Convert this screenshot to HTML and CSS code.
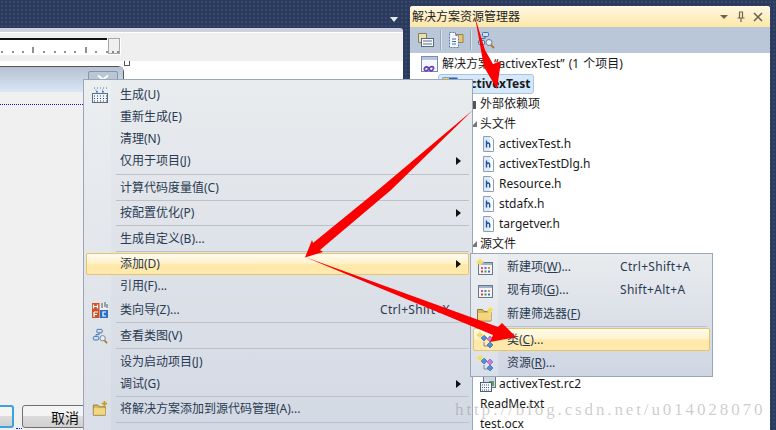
FILE: index.html
```html
<!DOCTYPE html>
<html lang="zh">
<head>
<meta charset="utf-8">
<title>解决方案资源管理器</title>
<link rel="stylesheet" href="styles.css">
</head>
<body>
<svg class="defs" width="0" height="0">
  <defs>
    <symbol id="i-h" viewBox="0 0 16 16">
      <path d="M3.500 .5h7l3 3v12h-10z" fill="#fff" stroke="#8aa0b8"/>
      <path d="M4 1h6v14H4z" fill="#dfeaf6"/>
      <path d="M6.500 4.500v7M6.500 8c1-1.400 3.200-1.400 3.200 .5v3" fill="none" stroke="#1c52a8" stroke-width="1.400"/>
    </symbol>
    <symbol id="i-newitem" viewBox="0 0 18 18">
      <rect x="2.500" y="4.500" width="14" height="12" fill="#f2f4f7" stroke="#68778c"/>
      <rect x="3" y="5" width="13" height="2" fill="#9fb3cc"/>
      <rect x="5" y="9" width="2" height="2" fill="#d94f8a"/><rect x="8.500" y="9" width="2" height="2" fill="#5a6fd0"/><rect x="12" y="9" width="2" height="2" fill="#e0902c"/>
      <rect x="5" y="12.500" width="2" height="2" fill="#d0452e"/><rect x="8.500" y="12.500" width="2" height="2" fill="#3d9a3d"/><rect x="12" y="12.500" width="2" height="2" fill="#3d6fd0"/>
    </symbol>
    <symbol id="i-class" viewBox="0 0 18 18">
      <path d="M8 11v4h4" fill="none" stroke="#7a8798"/>
      <path d="M5 7l3-3 3 3-3 3z" fill="#4a90d8" stroke="#2a5a98" stroke-width=".6"/>
      <path d="M11 8l3-3 3 3-3 3z" fill="#c87be0" stroke="#8a4aa8" stroke-width=".6"/>
      <path d="M11 14l3-3 3 3-3 3z" fill="#4a90d8" stroke="#2a5a98" stroke-width=".6"/>
      <path class="star" d="M4 0l1 2 2 1 1 1-2 1-1 1-1 2-1-2-2-1-1-1 2-1 1-1z"/>
    </symbol>
    <symbol id="i-folder" viewBox="0 0 18 18">
      <path d="M1.500 4.500h5l1.500 2h7v9.500h-13.500z" fill="#d8b858" stroke="#8f7a40"/>
      <path d="M2 8h13v7.500H2z" fill="#f3d67e"/>
    </symbol>
    <symbol id="i-build" viewBox="0 0 16 16">
      <rect x=".5" y="6.500" width="15" height="9" fill="#f0f3f7" stroke="#5c6c84"/>
      <path d="M2 9h1M5 9h1M8 9h1M11 9h1M14 9h1M2 11.500h1M5 11.500h1M8 11.500h1M11 11.500h1M14 11.500h1M2 14h1M5 14h1M8 14h1M11 14h1M14 14h1" stroke="#39475c"/>
      <path d="M4 4l1 3 1-3zM10 4l1 3 1-3z" fill="#2a6fe0"/>
      <path d="M2 1h1M5 1h1M8 1h1M11 1h1M14 1h1M3.500 3h1M10 3h1" stroke="#4a7ac0"/>
    </symbol>
    <symbol id="i-diagram" viewBox="0 0 18 18">
      <rect x="5.500" y="1.500" width="6" height="4" rx="1" fill="#cfe0f2" stroke="#3f6ea8"/>
      <rect x="1.500" y="9.500" width="6" height="4" rx="1" fill="#cfe0f2" stroke="#3f6ea8"/>
      <path d="M8 5.500v2H4.500v2" fill="none" stroke="#3f6ea8"/>
      <circle cx="12" cy="11.500" r="3" fill="#e8f0f8" stroke="#6a7a8c"/>
      <path d="M14 14l3 3" stroke="#b8782c" stroke-width="2"/>
    </symbol>
  </defs>
</svg>

<span class="dock-arrow"></span>

<section class="doc">
  <div class="doc-tools">
    <svg class="ruler" width="121" height="17" viewBox="0 0 121 17">
      <rect width="121" height="17" fill="#fff"/>
      <rect width="107" height="2" y="0" fill="#111"/>
      <path d="M2 13v2M13 13v2M23 13v2M33 9v6M44 13v2M55 13v2M65 13v2M75 13v2M86 9v6M96 13v2M107 13v2" stroke="#222"/>
      <rect x="108.500" y=".5" width="11" height="15" fill="#f0f0f0" stroke="#a8a8a8"/>
      <path d="M113 13v2M118 13v2" stroke="#222"/>
    </svg>
  </div>
  <div class="canvas">
    <span class="handle"></span>
    <div class="dialog">
      <div class="dlg-title">
        <span class="dlg-close">
          <svg width="12" height="6" viewBox="0 0 12 6"><path d="M1 .5l5 4 5-4" fill="none" stroke="#fff" stroke-width="2"/></svg>
        </span>
      </div>
      <div class="dlg-dots"></div>
      <div class="dlg-buttons">
        <button class="btn btn-ok"></button>
        <button class="btn btn-cancel">取消</button>
      </div>
      <div class="dlg-foot"></div>
    </div>
  </div>
</section>

<aside class="panel">
  <header class="panel-head">
    <span class="panel-title">解决方案资源管理器</span>
    <span class="panel-btns">
      <svg width="10" height="6" viewBox="0 0 10 6"><path d="M1 1h8L5 5z" fill="#6a6450"/></svg>
      <svg width="10" height="12" viewBox="0 0 10 12"><path d="M3 1h4M3.500 1v6M6.500 1v6M1.500 7h7M5 7v4" fill="none" stroke="#6a6450" stroke-width="1.200"/></svg>
      <svg width="10" height="10" viewBox="0 0 10 10"><path d="M1 1l8 8M9 1L1 9" stroke="#6a6450" stroke-width="1.600"/></svg>
    </span>
  </header>
  <div class="panel-tools">
    <svg width="18" height="18" viewBox="0 0 18 18"><path d="M1.500 2.500h8v9h-8z" fill="#eadfae" stroke="#8a8058"/><rect x="4.500" y="7.500" width="12" height="8" fill="#f6f8fb" stroke="#5a6a82"/><path d="M6 10h9M6 13h9" stroke="#5a6a82"/></svg>
    <span class="tool-sep"></span>
    <svg width="18" height="18" viewBox="0 0 18 18"><path d="M8 3.500h8v8H8z" fill="#e8c668" stroke="#9a8448"/><path d="M2.500 1.500h6v3h3v12h-9z" fill="#f4f7fb" stroke="#5a7ab0" stroke-dasharray="2 1"/><path d="M5 8h4M5 10.500h4M5 13h4" stroke="#3f6ea8"/></svg>
    <span class="tool-sep"></span>
    <svg width="18" height="18" viewBox="0 0 18 18"><use href="#i-diagram"/></svg>
  </div>
  <div class="tree">
    <div class="node lvl0">
      <svg width="17" height="17" viewBox="0 0 17 17"><rect x=".5" y=".5" width="16" height="15" fill="#f4f7fc" stroke="#7a8aa8"/><rect x="1" y="1" width="15" height="3" fill="#b7c6e0"/><path d="M3 13c1.500-3 3.500-3 5 0s3.500 2 4.500-.5c.5-2-2.500-3-4.500 0s-4 3-5 .5" fill="none" stroke="#6a3fb0" stroke-width="1.800"/></svg>
      <span class="sol-name">解决方案 “activexTest” (1 个项目)</span>
    </div>
    <div class="node lvl1"><span class="selected"><svg width="16" height="14" viewBox="0 0 16 14"><rect x=".5" y=".5" width="15" height="13" fill="#2f5fb0"/><rect x="1" y="1" width="6" height="5" fill="#f0d040"/></svg><b>ActivexTest</b></span></div>
    <div class="node lvl2 folder">外部依赖项</div>
    <div class="node lvl2 folder open">头文件</div>
    <div class="node lvl3"><svg width="16" height="16"><use href="#i-h"/></svg><span>activexTest.h</span></div>
    <div class="node lvl3"><svg width="16" height="16"><use href="#i-h"/></svg><span>activexTestDlg.h</span></div>
    <div class="node lvl3"><svg width="16" height="16"><use href="#i-h"/></svg><span>Resource.h</span></div>
    <div class="node lvl3"><svg width="16" height="16"><use href="#i-h"/></svg><span>stdafx.h</span></div>
    <div class="node lvl3"><svg width="16" height="16"><use href="#i-h"/></svg><span>targetver.h</span></div>
    <div class="node lvl2 folder open">源文件</div>
    <div class="covered"></div>
    <div class="node lvl3"><svg width="16" height="16" viewBox="0 0 16 16"><rect x="3.500" y=".5" width="12" height="11" fill="#cfd8e4" stroke="#66768c"/><rect x="9" y="5" width="5" height="5" fill="#5fa05a"/><rect x=".5" y="6.500" width="11" height="9" fill="#f4f6f9" stroke="#4f5f78"/><path d="M2 9h8M2 11.500h8M2 14h8" stroke="#4f5f78" stroke-dasharray="1 1"/></svg><span>activexTest.rc2</span></div>
    <div class="node lvl2">ReadMe.txt</div>
    <div class="node lvl2">test.ocx</div>
  </div>
</aside>

<nav class="menu">
  <div class="row"><svg class="ico" width="16" height="16"><use href="#i-build"/></svg><span>生成(U)</span></div>
  <div class="row"><span class="ico"></span><span>重新生成(E)</span></div>
  <div class="row"><span class="ico"></span><span>清理(N)</span></div>
  <div class="row"><span class="ico"></span><span>仅用于项目(J)</span><i class="more"></i></div>
  <div class="sep s1"></div>
  <div class="row"><span class="ico"></span><span>计算代码度量值(C)</span></div>
  <div class="sep s2"></div>
  <div class="row"><span class="ico"></span><span>按配置优化(P)</span><i class="more"></i></div>
  <div class="sep s4"></div>
  <div class="row"><span class="ico"></span><span>生成自定义(B)...</span></div>
  <div class="sep s2"></div>
  <div class="row hot"><span class="ico"></span><span>添加(D)</span><i class="more"></i></div>
  <div class="row"><span class="ico"></span><span>引用(F)...</span></div>
  <div class="row push"><svg class="ico" width="16" height="16" viewBox="0 0 16 16"><rect y="1" width="7.500" height="7" fill="#d4502a"/><rect x="8" y="8" width="8" height="8" fill="#2a70c8"/><rect y="8" width="7.500" height="8" fill="#c8542c"/><rect x="8" y="1" width="8" height="7" fill="#e8eef4"/><path d="M10 1v5M13 0v5M15 2v4" stroke="#555"/><path d="M1.500 2.500v4M5.500 2.500v4M1.500 4.500h4M2 10h4M2 10v5M2 12.500h3M14 10h-3v4h3" fill="none" stroke="#fff" stroke-width="1.200"/></svg><span>类向导(Z)...</span><span class="key">Ctrl+Shift+X</span></div>
  <div class="sep s4"></div>
  <div class="row"><svg class="ico" width="16" height="16" viewBox="0 0 18 18"><use href="#i-diagram"/></svg><span>查看类图(V)</span></div>
  <div class="sep s4"></div>
  <div class="row"><span class="ico"></span><span>设为启动项目(J)</span></div>
  <div class="row"><span class="ico"></span><span>调试(G)</span><i class="more"></i></div>
  <div class="sep s2"></div>
  <div class="row"><svg class="ico" width="16" height="16" viewBox="0 0 18 18"><use href="#i-folder"/><path d="M14 0v6M11 3h6" stroke="#c8a020" stroke-width="2"/></svg><span>将解决方案添加到源代码管理(A)...</span></div>
  <div class="sep s1"></div>
</nav>

<nav class="submenu">
  <div class="row"><svg class="ico" width="18" height="18" viewBox="0 0 18 18"><use href="#i-newitem"/><path class="star" d="M4 0l1 2 2 1 1 1-2 1-1 1-1 2-1-2-2-1-1-1 2-1 1-1z"/></svg><span>新建项(<u>W</u>)...</span><span class="key">Ctrl+Shift+A</span></div>
  <div class="row next"><svg class="ico" width="18" height="18"><use href="#i-newitem"/></svg><span>现有项(<u>G</u>)...</span><span class="key">Shift+Alt+A</span></div>
  <div class="row push"><svg class="ico" width="18" height="18" viewBox="0 0 18 18"><use href="#i-folder"/><path class="star" transform="translate(10 1)" d="M4 0l1 2 2 1 1 1-2 1-1 1-1 2-1-2-2-1-1-1 2-1 1-1z"/></svg><span>新建筛选器(<u>F</u>)</span></div>
  <div class="sep s4"></div>
  <div class="row hot"><svg class="ico" width="18" height="18"><use href="#i-class"/></svg><span>类(<u>C</u>)...</span></div>
  <div class="row next"><svg class="ico" width="18" height="18"><use href="#i-class"/></svg><span>资源(<u>R</u>)...</span></div>
</nav>

<svg class="arrows" width="776" height="430" viewBox="0 0 776 430">
  <path d="M475 17L485 50 493 64 501 61 497 89 484 67Z"/>
  <path d="M473 110L391 190 320 250 323 252 305 257.500 312 240 313 243 378 190Z"/>
  <path d="M305 257L498 327 502 323 516 337 490 342 493 335Z"/>
</svg>

<div class="watermark">http://blog.csdn.net/u014028070</div>
</body>
</html>
```

FILE: styles.css
```css
* { box-sizing: border-box; }
html, body { margin: 0; padding: 0; }
body {
  position: relative;
  width: 776px;
  height: 430px;
  overflow: hidden;
  font: 12px/16px "Noto Sans", "Open Sans", "Noto Sans CJK SC", sans-serif;
  color: #1b2a3c;
  background-color: #2a3b5d;
  background-image: radial-gradient(#36486c 1px, transparent 1px);
  background-size: 4px 4px;
}
.defs { position: absolute; }
.star { fill: #f3dc62; stroke: #f8efae; stroke-width: .5; }
u { text-decoration: underline; text-underline-offset: 1px; }

.dock-arrow {
  position: absolute;
  left: 390px;
  top: 17px;
  border: 4px solid transparent;
  border-top: 5px solid #e4e8f0;
  border-bottom: 0;
}

/* document pane */
.doc {
  position: absolute;
  left: 0;
  top: 28px;
  width: 403px;
  height: 402px;
  display: flex;
  flex-direction: column;
  background: #fff;
  border-top: 4px solid #cdd2de;
  border-top-right-radius: 3px;
  overflow: hidden;
}
.doc-tools {
  height: 28px;
  margin-top: 1px;
  padding-top: 5px;
  background: #efefef;
  flex: none;
}
.ruler { display: block; }
.canvas { position: relative; flex: 1; padding-top: 5px; min-height: 0; }
.handle {
  position: absolute;
  left: 124px;
  top: 0;
  width: 6px;
  height: 5px;
  background: #fff;
  border: 1px solid #555;
  border-top: 0;
}
.dialog {
  width: 124px;
  height: 100%;
  display: flex;
  flex-direction: column;
  background: #f0f0f0;
  border-top: 1px solid #555;
  border-right: 1px solid #555;
  border-top-right-radius: 6px;
}
.dlg-title {
  height: 25px;
  flex: none;
  padding: 4px 4px 0 88px;
  background: linear-gradient(#b4c1d0, #dae7f6);
}
.dlg-close {
  display: flex;
  justify-content: center;
  padding-top: 3px;
  width: 30px;
  height: 20px;
  border: 1px solid #8a94a4;
  border-radius: 2px;
  background: #b9c6d6;
}
.dlg-close svg { display: block; }
.dlg-dots { margin-top: 12px; border-top: 1px dotted #1a1ab8; }
.dlg-buttons {
  margin-top: auto;
  display: flex;
  gap: 8px;
  margin-left: -40px;
  width: 160px;
  flex: none;
}
.btn {
  height: 23px;
  padding: 0;
  flex: none;
  font: 14px/20px "Noto Sans CJK SC", sans-serif;
  color: #111;
  border-radius: 3px;
  border: 1px solid #707070;
  background: linear-gradient(#f4f4f4 45%, #dcdcdc 50%, #d0d0d0);
}
.btn-ok { width: 54px; border: 2px solid #3aa2dc; }
.btn-cancel { width: 86px; }
.dlg-foot {
  flex: none;
  height: 2px;
  margin: 0 0 0 16px;
  width: 6px;
  border-top: 1px dotted #1a1ab8;
}

/* solution explorer */
.panel {
  position: absolute;
  left: 410px;
  top: 6px;
  width: 360px;
  height: 424px;
  background: #fff;
  border-radius: 3px 3px 0 0;
  overflow: hidden;
}
.panel-head {
  height: 21px;
  display: flex;
  align-items: center;
  justify-content: space-between;
  padding: 0 7px 0 2px;
  background: linear-gradient(#fff8e4, #fde7a6);
  color: #222;
}
.panel-btns { display: flex; align-items: center; gap: 7px; }
.panel-btns svg { display: block; }
.panel-tools {
  height: 26px;
  display: flex;
  align-items: center;
  gap: 5px;
  padding-left: 7px;
  background: #bac7d8;
}
.tool-sep { width: 1px; height: 20px; background: #9aa8bc; border-right: 1px solid #d8e0ea; box-sizing: content-box; }
.tree { color: #1a1a1a; padding-top: 1px; }
.node {
  height: 20px;
  display: flex;
  align-items: center;
  gap: 3px;
  position: relative;
  white-space: nowrap;
}
.lvl0 { padding-left: 11px; gap: 4px; }
.sol-name { word-spacing: 1px; }
.lvl1 { padding-left: 28px; }
.lvl2 { padding-left: 70px; }
.lvl3 { padding-left: 70px; }
.folder::before {
  content: "";
  position: absolute;
  left: 58px;
  top: 7px;
  width: 8px;
  height: 8px;
  background: #555;
}
.open::before {
  left: 61px;
  width: 0;
  height: 0;
  background: none;
  border: 3px solid transparent;
  border-right-color: #777;
  border-bottom-color: #777;
}
.selected {
  display: flex;
  align-items: center;
  gap: 4px;
  height: 20px;
  width: 96px;
  padding-left: 3px;
  background: #d6e8fb;
  border: 1px solid #a8c4e4;
  border-radius: 3px;
}
.selected b { font-weight: 700; }
.covered { height: 120px; }

/* context menus */
.menu, .submenu {
  position: absolute;
  border: 1px solid #9ba6b8;
  color: #2a3a52;
}
.menu {
  left: 83px;
  top: 79px;
  width: 390px;
  height: 351px;
  padding: 4px 3px 0 2px;
  border-bottom: 0;
  background:
    linear-gradient(rgba(255,255,255,.14), rgba(255,255,255,.14)) 0 0 / 27px 100% no-repeat,
    linear-gradient(#e9ecee, #d3d9e4);
}
.submenu {
  left: 470px;
  top: 253px;
  width: 243px;
  height: 124px;
  padding: 2px 2px 0 2px;
  background:
    linear-gradient(rgba(255,255,255,.22), rgba(255,255,255,.22)) 0 0 / 27px 100% no-repeat,
    linear-gradient(#e9ecee, #cfd6e3);
}
.row {
  position: relative;
  height: 22px;
  display: flex;
  align-items: center;
  border: 1px solid transparent;
  border-radius: 2px;
  white-space: nowrap;
}
.ico { flex: none; display: block; }
.menu .ico { width: 16px; margin: 0 12px 0 5px; }
.submenu .ico { width: 18px; margin: 0 13px 0 2px; }
.row.next { margin-top: 1px; }
.row.push { margin-top: 2px; }
.hot {
  border-color: #e8c468;
  background: linear-gradient(#fffbee, #fff3cd 45%, #ffe8a8 55%, #ffe9ae);
}
.submenu .hot { height: 23px; margin-top: -1px; }
.more {
  position: absolute;
  right: 7px;
  top: 6px;
  border: 4px solid transparent;
  border-left: 5px solid #111;
  border-right: 0;
}
.key { position: absolute; letter-spacing: .3px; }
.menu .key { left: 293px; }
.submenu .key { left: 146px; }
.sep { height: 1px; background: #bcc1ca; }
.menu .sep { margin-left: 30px; }
.submenu .sep { margin-left: 3px; margin-right: 3px; }
.s1 { margin-top: 2px; margin-bottom: 2px; }
.s2 { margin-top: 1px; margin-bottom: 1px; }
.s4 { margin-top: 1px; margin-bottom: 2px; }

/* overlay annotations */
.arrows { position: absolute; left: 0; top: 0; pointer-events: none; }
.arrows path { fill: #fb0000; }
.watermark {
  position: absolute;
  left: 455px;
  top: 400px;
  font: 17px/20px "Liberation Serif", serif;
  letter-spacing: 2.88px;
  color: rgba(120,120,120,.38);
  white-space: nowrap;
}
```
